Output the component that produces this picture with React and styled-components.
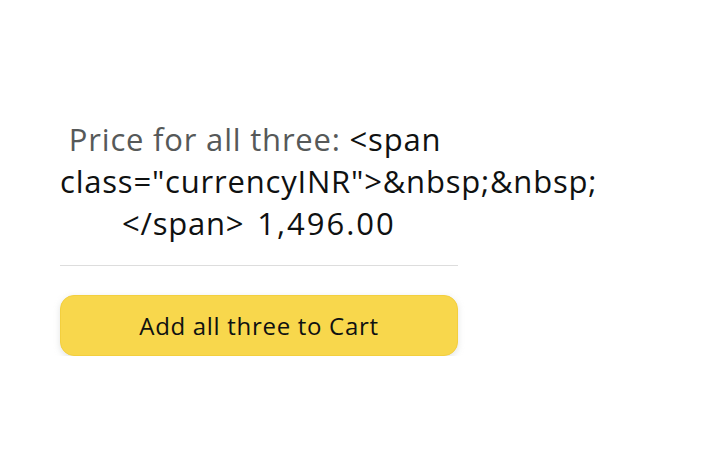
import React from 'react'
import styled, { createGlobalStyle } from 'styled-components'

const GlobalStyle = createGlobalStyle`
  body {
    margin: 0;
    background: #fff;
    font-family: "Open Sans", "Noto Sans", Arial, sans-serif;
  }
`

const Page = styled.div`
  padding: 118px 0 0 60px;
`

const Box = styled.div`
  width: 398px;
`

const PriceText = styled.div`
  font-size: 31px;
  line-height: 42px;
  color: #0f1111;
  white-space: pre;
  letter-spacing: 0.8px;
`

const Label = styled.span`
  color: #565959;
`

const Amount = styled.span`
  margin-left: 4px;
  letter-spacing: 2px;
`

const Divider = styled.hr`
  border: 0;
  border-top: 1px solid #dddddd;
  margin: 21px 0 29px;
`

const CartButton = styled.button`
  width: 100%;
  height: 61px;
  background: #f8d74c;
  border: 1px solid #f3cf3e;
  border-radius: 14px;
  box-shadow: 0 2px 6px rgba(213, 217, 217, 0.7);
  font-family: inherit;
  font-size: 24px;
  letter-spacing: 0.7px;
  color: #0f1111;
  cursor: pointer;
`

const App = () => {
  return (
    <>
      <GlobalStyle />
      <Page>
        <Box>
          <PriceText>
            {' '}<Label>Price for all three:</Label>{' <span'}
            <br />
            {'class="currencyINR">&nbsp;&nbsp;'}
            <br />
            {'       </span> '}<Amount>1,496.00</Amount>
          </PriceText>
          <Divider />
          <CartButton>Add all three to Cart</CartButton>
        </Box>
      </Page>
    </>
  )
}

export default App
